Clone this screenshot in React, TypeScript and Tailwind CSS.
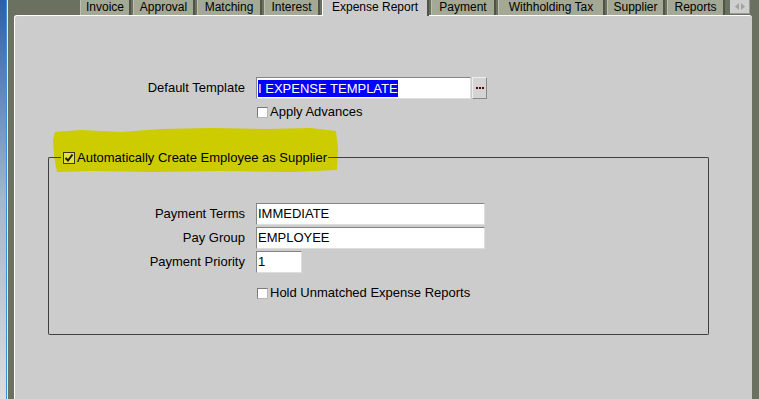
const tabs = [
  { name: "Invoice", w: "w-[51px]" },
  { name: "Approval", w: "w-[62px]" },
  { name: "Matching", w: "w-[65px]" },
  { name: "Interest", w: "w-[56px]" },
  { name: "Expense Report", w: "w-[107px]", active: true },
  { name: "Payment", w: "w-[65px]" },
  { name: "Withholding Tax", w: "w-[107px]" },
  { name: "Supplier", w: "w-[58px]" },
  { name: "Reports", w: "w-[58px]" },
];

function Box({ checked }: { checked?: boolean }) {
  if (checked) {
    return (
      <span className="w-[12px] h-[12px] border border-[#3a3a20] bg-[#e2e23a] flex items-center justify-center">
        <svg width="10" height="10" viewBox="0 0 10 10">
          <path d="M1.5 5 L4 7.5 L8.5 1.5" stroke="#1a1a00" strokeWidth="2" fill="none" />
        </svg>
      </span>
    );
  }
  return <span className="w-[11px] h-[11px] border border-[#7a7a7a] border-r-[#b8b8b8] border-b-[#b8b8b8] bg-white" />;
}

function Field({ value, w }: { value: string; w: string }) {
  return (
    <div className={`${w} h-[22px] ml-[11px] bg-white border border-[#858585] border-r-[#dedede] border-b-[#dedede] flex items-center pl-[1px] text-[13px] text-black`}>
      {value}
    </div>
  );
}

export default function App() {
  return (
    <div className="w-[759px] h-[399px] flex bg-[#6b7161] overflow-hidden font-['Liberation_Sans',Arial,sans-serif] text-black">
      <div className="w-[6px] h-full bg-gradient-to-b from-[#2d5ea6] via-[#a6b6cb] to-[#dcdcdc]" />
      <div className="w-[1px] h-full bg-[#3a8ce0]" />
      <div className="w-[1px] h-full bg-[#e6ecf2]" />
      <div className="flex-1 flex flex-col">
        <div className="h-[15px] flex gap-[2px] pl-[72px] relative z-10">
          {tabs.map((t) =>
            t.active ? (
              <div
                key={t.name}
                className={`${t.w} h-[16px] bg-[#cccccc] border-l border-white border-r-2 border-r-[#4e5446] text-[12px] leading-[14px] text-center`}
              >
                {t.name}
              </div>
            ) : (
              <div
                key={t.name}
                className={`${t.w} h-[15px] bg-[#a4a996] border-l border-[#bcc0ae] border-r-2 border-r-[#4e5446] text-[12px] leading-[14px] text-center`}
              >
                {t.name}
              </div>
            )
          )}
          <div className="ml-[3px] w-[20px] h-[14px] bg-[#cfcfcf] border-r border-b border-[#9a9a9a] flex items-center justify-center gap-[2px]">
            <svg width="4" height="7" viewBox="0 0 4 7"><path d="M4 0 L0 3.5 L4 7 Z" fill="#a2a2a2" /></svg>
            <svg width="4" height="7" viewBox="0 0 4 7"><path d="M0 0 L4 3.5 L0 7 Z" fill="#a2a2a2" /></svg>
          </div>
        </div>
        <div className="flex-1 flex">
          <div className="ml-[6px] w-[738px] h-full relative bg-[#cccccc] border-t border-l border-white rounded-tl-[3px] rounded-tr-[3px]">
            <svg className="absolute left-[36px] top-[110px]" width="290" height="48" viewBox="0 0 290 48">
              <path
                d="M4 6 L30 4 L70 6 L110 3 L160 2 L215 3 L260 2 L285 5 L287 22 L286 44 L240 46 L170 45 L100 46 L40 45 L6 46 L3 30 L2 14 Z"
                fill="#cccc00"
              />
            </svg>
            <div className="relative flex flex-col">
              <div className="mt-[61px] flex items-center h-[22px]">
                <div className="w-[230px] text-right text-[13px]">Default Template</div>
                <div className="ml-[11px] w-[215px] h-[22px] bg-white border border-[#858585] border-r-[#dedede] border-b-[#dedede] flex items-center pl-[1px]">
                  <span className="bg-[#0000ff] text-white text-[13px] leading-[17px]">I EXPENSE TEMPLATE</span>
                </div>
                <div className="w-[15px] h-[22px] ml-[1px] bg-[#d4d4d4] border border-[#8a8a8a] border-l-[#eeeeee] border-t-[#eeeeee] flex items-center justify-center gap-[1px]">
                  <span className="w-[2px] h-[2px] bg-[#5a0000]" />
                  <span className="w-[2px] h-[2px] bg-[#5a0000]" />
                  <span className="w-[2px] h-[2px] bg-[#5a0000]" />
                </div>
              </div>
              <div className="mt-[5px] h-[16px] flex items-center pl-[242px]">
                <Box />
                <span className="ml-[2px] text-[13px]">Apply Advances</span>
              </div>
              <div className="mt-[30px] ml-[33px] w-[661px]">
                <div className="h-[15px] flex">
                  <div className="w-[13px] h-[8px] self-end border-t border-l border-[#404040] rounded-tl-[2px]" />
                  <div className="pl-[2px] pr-[1px] flex items-center">
                    <Box checked />
                    <span className="ml-[2px] text-[13px] leading-[15px]">Automatically Create Employee as Supplier</span>
                  </div>
                  <div className="flex-1 h-[8px] self-end border-t border-r border-[#404040] rounded-tr-[2px]" />
                </div>
                <div className="h-[170px] border-l border-r border-b border-[#404040] rounded-b-[2px] pt-[38px] flex flex-col">
                  <div className="flex items-center h-[22px]">
                    <div className="w-[196px] text-right text-[13px]">Payment Terms</div>
                    <Field value="IMMEDIATE" w="w-[229px]" />
                  </div>
                  <div className="mt-[2px] flex items-center h-[22px]">
                    <div className="w-[196px] text-right text-[13px]">Pay Group</div>
                    <Field value="EMPLOYEE" w="w-[229px]" />
                  </div>
                  <div className="mt-[2px] flex items-center h-[22px]">
                    <div className="w-[196px] text-right text-[13px]">Payment Priority</div>
                    <Field value="1" w="w-[46px]" />
                  </div>
                  <div className="mt-[12px] h-[16px] flex items-center pl-[208px]">
                    <Box />
                    <span className="ml-[2px] text-[13px]">Hold Unmatched Expense Reports</span>
                  </div>
                </div>
              </div>
            </div>
          </div>
        </div>
      </div>
    </div>
  );
}
